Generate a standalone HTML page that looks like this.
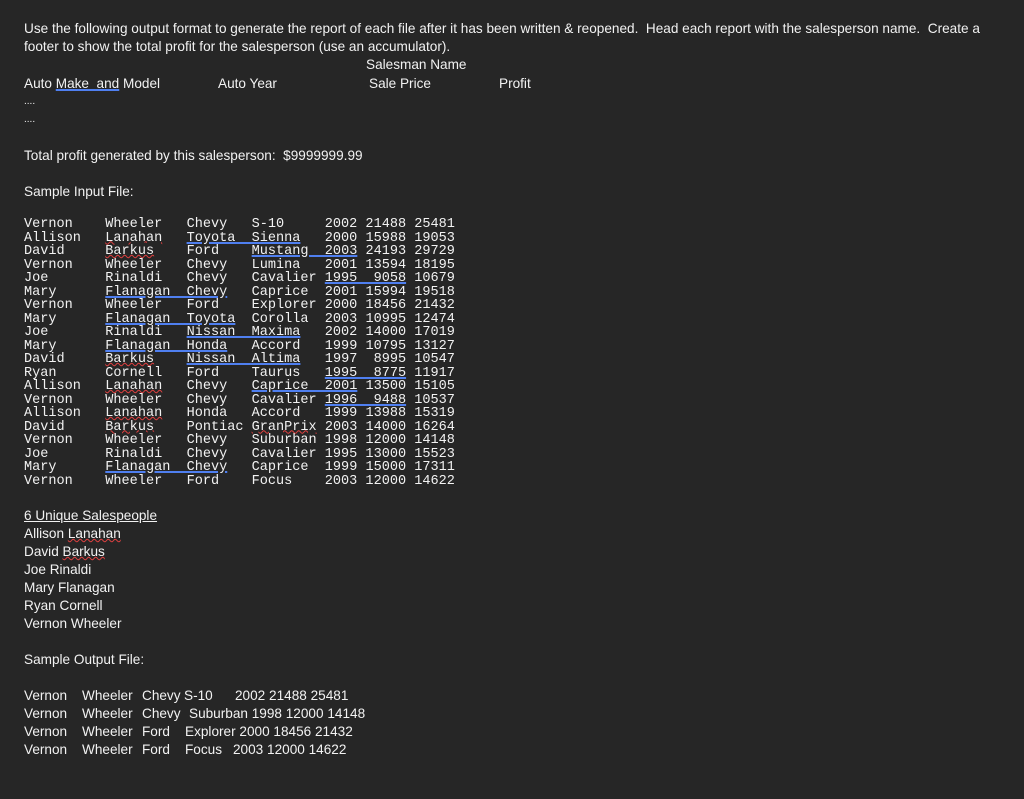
<!DOCTYPE html>
<html><head><meta charset="utf-8"><style>
html,body{margin:0;padding:0;background:#262626;}
body{width:1024px;height:799px;position:relative;overflow:hidden;color:#f2f2f2;font-family:"Liberation Sans",sans-serif;font-size:13.6px;}
.l{position:absolute;white-space:nowrap;line-height:18px;}
pre{position:absolute;left:24px;top:218px;margin:0;font-family:"Liberation Mono",monospace;font-size:13.55px;line-height:13.5px;color:#f2f2f2;}
.b{text-decoration:underline;text-decoration-color:#4f7ff0;text-decoration-thickness:2px;text-underline-offset:1px;}
.r{text-decoration:underline wavy #e04040;text-decoration-thickness:1px;text-underline-offset:0px;}
.u{text-decoration:underline;}
</style></head><body>
<div class="l" style="left:24px;top:20px">Use the following output format to generate the report of each file after it has been written &amp; reopened.&nbsp; Head each report with the salesperson name.&nbsp; Create a</div>
<div class="l" style="left:24px;top:38px">footer to show the total profit for the salesperson (use an accumulator).</div>
<div class="l" style="left:366px;top:56px">Salesman Name</div>
<div class="l" style="left:24px;top:75px">Auto <span class="b">Make&nbsp; and</span> Model</div>
<div class="l" style="left:218px;top:75px">Auto Year</div>
<div class="l" style="left:369px;top:75px">Sale Price</div>
<div class="l" style="left:499px;top:75px">Profit</div>
<div class="l" style="left:24px;top:93px;font-size:10px">....</div>
<div class="l" style="left:24px;top:111px;font-size:10px">....</div>
<div class="l" style="left:24px;top:147px">Total profit generated by this salesperson:&nbsp; $9999999.99</div>
<div class="l" style="left:24px;top:183px">Sample Input File:</div>
<pre>Vernon    Wheeler   Chevy   S-10     2002 21488 25481
Allison   <span class="r">Lanahan</span>   <span class="b">Toyota  Sienna</span>   2000 15988 19053
David     <span class="r">Barkus</span>    Ford    <span class="b">Mustang  2003</span> 24193 29729
Vernon    Wheeler   Chevy   Lumina   2001 13594 18195
Joe       Rinaldi   Chevy   Cavalier <span class="b">1995  9058</span> 10679
Mary      <span class="b">Flanagan  Chevy</span>   Caprice  2001 15994 19518
Vernon    Wheeler   Ford    Explorer 2000 18456 21432
Mary      <span class="b">Flanagan  Toyota</span>  Corolla  2003 10995 12474
Joe       Rinaldi   <span class="b">Nissan  Maxima</span>   2002 14000 17019
Mary      <span class="b">Flanagan  Honda</span>   Accord   1999 10795 13127
David     <span class="r">Barkus</span>    <span class="b">Nissan  Altima</span>   1997  8995 10547
Ryan      Cornell   Ford    Taurus   <span class="b">1995  8775</span> 11917
Allison   <span class="r">Lanahan</span>   Chevy   <span class="b">Caprice  2001</span> 13500 15105
Vernon    Wheeler   Chevy   Cavalier <span class="b">1996  9488</span> 10537
Allison   <span class="r">Lanahan</span>   Honda   Accord   1999 13988 15319
David     <span class="r">Barkus</span>    Pontiac <span class="r">GranPrix</span> 2003 14000 16264
Vernon    Wheeler   Chevy   Suburban 1998 12000 14148
Joe       Rinaldi   Chevy   Cavalier 1995 13000 15523
Mary      <span class="b">Flanagan  Chevy</span>   Caprice  1999 15000 17311
Vernon    Wheeler   Ford    Focus    2003 12000 14622</pre>
<div class="l" style="left:24px;top:507px"><span class="u">6 Unique Salespeople</span></div>
<div class="l" style="left:24px;top:525px">Allison <span class="r">Lanahan</span></div>
<div class="l" style="left:24px;top:543px">David <span class="r">Barkus</span></div>
<div class="l" style="left:24px;top:561px">Joe Rinaldi</div>
<div class="l" style="left:24px;top:579px">Mary Flanagan</div>
<div class="l" style="left:24px;top:597px">Ryan Cornell</div>
<div class="l" style="left:24px;top:615px">Vernon Wheeler</div>
<div class="l" style="left:24px;top:651px">Sample Output File:</div>
<div class="l" style="left:24px;top:687px">Vernon</div><div class="l" style="left:82px;top:687px">Wheeler</div><div class="l" style="left:142px;top:687px">Chevy</div><div class="l" style="left:184px;top:687px">S-10</div><div class="l" style="left:235px;top:687px">2002 21488 25481</div>
<div class="l" style="left:24px;top:705px">Vernon</div><div class="l" style="left:82px;top:705px">Wheeler</div><div class="l" style="left:142px;top:705px">Chevy</div><div class="l" style="left:189px;top:705px">Suburban 1998 12000 14148</div>
<div class="l" style="left:24px;top:723px">Vernon</div><div class="l" style="left:82px;top:723px">Wheeler</div><div class="l" style="left:142px;top:723px">Ford</div><div class="l" style="left:185px;top:723px">Explorer 2000 18456 21432</div>
<div class="l" style="left:24px;top:741px">Vernon</div><div class="l" style="left:82px;top:741px">Wheeler</div><div class="l" style="left:142px;top:741px">Ford</div><div class="l" style="left:185px;top:741px">Focus</div><div class="l" style="left:233px;top:741px">2003 12000 14622</div>
</body></html>
